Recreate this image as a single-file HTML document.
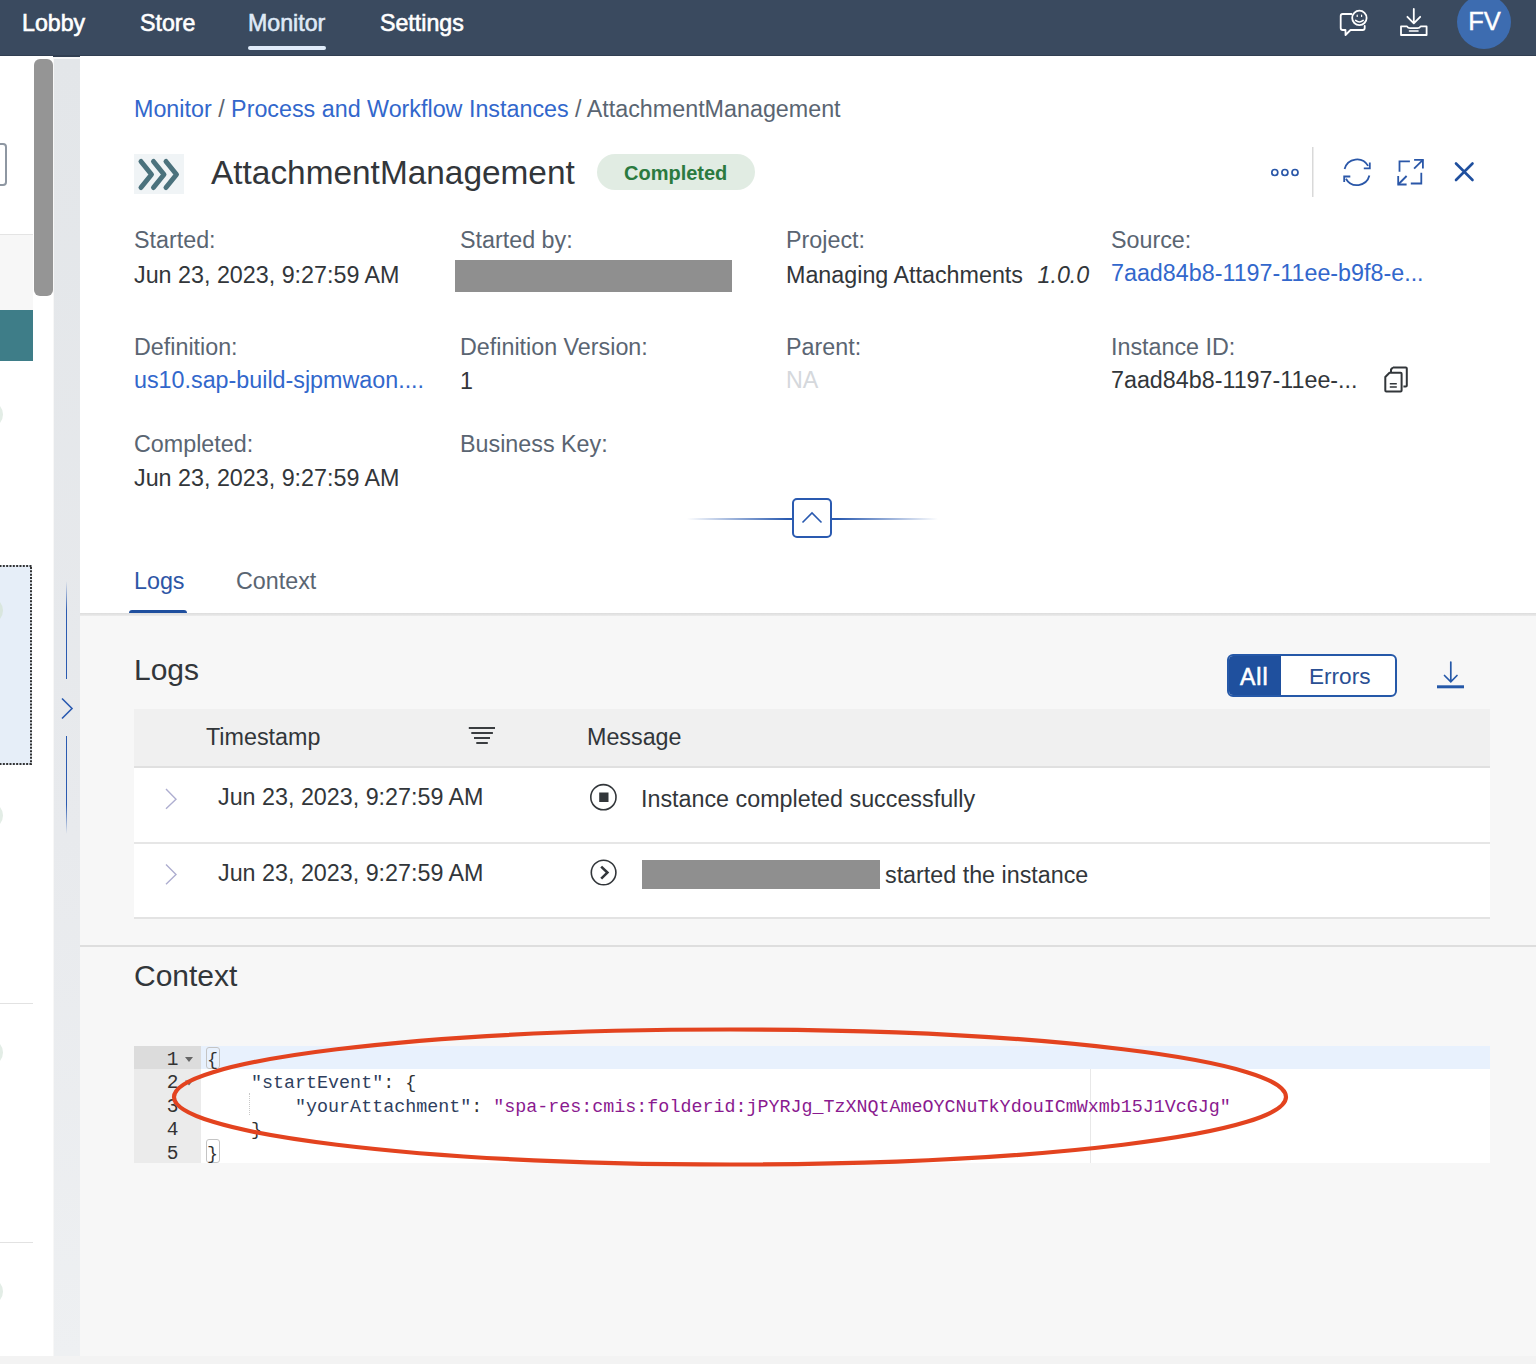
<!DOCTYPE html>
<html><head><meta charset="utf-8">
<style>
*{box-sizing:border-box;margin:0;padding:0}
html,body{width:1536px;height:1364px;overflow:hidden;background:#f7f7f7;font-family:"Liberation Sans",sans-serif;color:#32363a}
.abs{position:absolute}
#hdr{left:0;top:0;width:1536px;height:57px;background:#3a4a5f;border-bottom:2px solid #313f52}
.nav{position:absolute;top:9px;font-size:23.2px;font-weight:normal;-webkit-text-stroke:0.6px currentColor;color:#fff;line-height:28px}
#left{left:0;top:56px;width:33px;height:1300px;background:#fff}
#sb{left:33px;top:56px;width:20px;height:1300px;background:#fff}
#thumb{left:34px;top:59px;width:19.3px;height:237px;background:#959595;border-radius:6px}
#strip{left:54px;top:58.5px;width:26px;height:1297.5px;background:linear-gradient(180deg,#e3e6e9,#e8eaed 60%,#eef0f2)}
#white{left:80px;top:56px;width:1456px;height:557px;background:#fff}
.t23{font-size:23.3px;line-height:28px;white-space:nowrap}
.lbl{color:#5a6572}
.val{color:#32363a}
.lnk{color:#3267cc}
</style></head><body>
<div id="hdr" class="abs">
  <div class="nav" style="left:22px">Lobby</div>
  <div class="nav" style="left:140px">Store</div>
  <div class="nav" style="left:248px;color:#dfe9f6">Monitor</div>
  <div class="abs" style="left:248px;top:46px;width:78px;height:4px;border-radius:2px;background:#e0ecfa"></div>
  <div class="nav" style="left:380px">Settings</div>
  <svg class="abs" style="left:1330px;top:0" width="110" height="56" viewBox="0 0 110 56">
    <g fill="none" stroke="#fff" stroke-width="1.8" stroke-linejoin="round" stroke-linecap="round">
      <path d="M21.5 14 H12.7 Q10.7 14 10.7 16 V28 Q10.7 30 12.7 30 H15.5 V35 L20.5 30 H32.7 Q34.7 30 34.7 28 V25.8"/>
      <circle cx="29.4" cy="17.9" r="7.2"/>
      <path d="M25.6 20.4 Q29.4 23.6 33.2 20.4" stroke-width="1.6"/>
      <path d="M27.2 15.2 v1.2 M31.6 15.2 v1.2" stroke-width="1.2"/>
      <path d="M83.8 9 V23 M77.4 16.8 L83.8 23.4 L90.2 16.8"/>
      <path d="M71 26.4 H77 Q78 28.2 80 28.2 H87.6 Q89.6 28.2 90.6 26.4 H96.6 V35 H71 Z"/>
      <path d="M79.5 31 H88" stroke-width="1.6"/>
    </g>
  </svg>
  <div class="abs" style="left:1457px;top:-5.5px;width:54px;height:54px;border-radius:27px;background:#3d6cb0"></div>
  <div class="abs" style="left:1457.5px;top:5px;width:54px;text-align:center;color:#fff;font-size:25.5px;line-height:32px;-webkit-text-stroke:0.4px #fff">FV</div>
</div>
<div id="left" class="abs"></div>
<div class="abs" style="left:-10px;top:143px;width:17px;height:43px;border:2px solid #8e97a2;border-radius:4px;background:#fff"></div>
<div class="abs" style="left:0;top:234px;width:33px;height:1px;background:#e4e4e4"></div>
<div class="abs" style="left:0;top:235px;width:33px;height:75px;background:#f7f7f7"></div>
<div class="abs" style="left:0;top:310px;width:33px;height:51px;background:#3e7d88"></div>
<div class="abs" style="left:-24px;top:401px;width:27px;height:27px;border-radius:14px;background:#e3ede6"></div>
<div class="abs" style="left:0;top:565px;width:32px;height:200px;background:#e6eef8"></div>
<svg class="abs" style="left:0;top:560px" width="40" height="210" viewBox="0 560 40 210"><g stroke="#333" stroke-width="2" stroke-dasharray="2 1.33" fill="none"><path d="M-0.5 566 H32"/><path d="M31 567 V765"/><path d="M-0.5 764 H32"/></g></svg>
<div class="abs" style="left:-24px;top:597px;width:27px;height:27px;border-radius:14px;background:#d9e6de"></div>
<div class="abs" style="left:-24px;top:802px;width:27px;height:27px;border-radius:14px;background:#e3ede6"></div>
<div class="abs" style="left:0;top:1003px;width:33px;height:1px;background:#e2e2e2"></div>
<div class="abs" style="left:-24px;top:1039px;width:27px;height:27px;border-radius:14px;background:#e3ede6"></div>
<div class="abs" style="left:0;top:1242px;width:33px;height:1px;background:#e2e2e2"></div>
<div class="abs" style="left:-24px;top:1278px;width:27px;height:27px;border-radius:14px;background:#e3ede6"></div>
<div class="abs" style="left:0;top:1356px;width:1536px;height:8px;background:#f3f3f3"></div>
<div id="sb" class="abs"></div>
<div id="strip" class="abs"></div>
<div id="thumb" class="abs"></div>
<div id="white" class="abs"></div>
<div class="abs" style="left:65.5px;top:581px;width:1.5px;height:98px;background:linear-gradient(180deg,rgba(42,90,176,0),#2a5ab0 30%,#2a5ab0)"></div>
<div class="abs" style="left:65.5px;top:736px;width:1.5px;height:98px;background:linear-gradient(180deg,#2a5ab0,#2a5ab0 70%,rgba(42,90,176,0))"></div>
<svg class="abs" style="left:55px;top:690px" width="25" height="40"><path d="M7 8.5 L17 18.5 L7 28.5" fill="none" stroke="#2a5ab0" stroke-width="1.6"/></svg>


<!-- breadcrumb -->
<div class="abs t23" style="left:134px;top:95px"><span class="lnk">Monitor</span><span class="lbl"> / </span><span class="lnk">Process and Workflow Instances</span><span class="lbl"> / AttachmentManagement</span></div>

<!-- title -->
<div class="abs" style="left:134px;top:154px;width:50px;height:40px;background:#f0f4f6"></div>
<svg class="abs" style="left:0;top:0" width="200" height="200"><g fill="none" stroke="#4b727d" stroke-width="5" stroke-linecap="round" stroke-linejoin="round"><path d="M141 161.5 L151.5 174.5 L141 187.5"/><path d="M153.5 161.5 L164 174.5 L153.5 187.5"/><path d="M166 161.5 L176.5 174.5 L166 187.5"/></g></svg>
<div class="abs" style="left:211px;top:151px;font-size:33.4px;line-height:44px;color:#32363a;white-space:nowrap">AttachmentManagement</div>
<div class="abs" style="left:597px;top:154px;width:158px;height:36px;border-radius:18px;background:#e1ece3"></div>
<div class="abs" style="left:624px;top:161px;font-size:20px;line-height:24px;font-weight:bold;color:#2b7a3f;white-space:nowrap">Completed</div>


<!-- actions -->
<svg class="abs" style="left:1260px;top:140px" width="230" height="70" viewBox="1260 140 230 70">
  <g fill="none" stroke="#2a57a8" stroke-width="1.7">
    <circle cx="1274.8" cy="172.5" r="3"/><circle cx="1284.9" cy="172.5" r="3"/><circle cx="1295" cy="172.5" r="3"/>
  </g>
  <rect x="1312" y="147" width="1.5" height="50" fill="#d9d9d9"/>
  <g fill="none" stroke="#2a57a8" stroke-width="1.8" stroke-linecap="butt" stroke-linejoin="miter">
    <path d="M1344.6 169 A12.8 12.8 0 0 1 1368.1 165.9"/>
    <path d="M1369.4 175.6 A12.8 12.8 0 0 1 1345.9 178.7"/>
    <path d="M1363.8 168.4 H1369.8 V162.6" stroke-linecap="butt"/>
    <path d="M1350.3 176.5 H1344.2 V182" stroke-linecap="butt"/>
    <path d="M1409.9 161.4 H1399.5 V171.8"/><path d="M1414.1 159.8 H1422.9 V168.6"/><path d="M1414.1 168.6 L1422.9 159.8"/>
    <path d="M1398.2 184.5 L1406.6 176"/><path d="M1398.2 176 V184.5 H1406.6"/><path d="M1410.8 183.5 H1421.3 V172.8"/>
  </g>
  <g stroke="#1f4f9e" stroke-width="2.6" stroke-linecap="round"><path d="M1456 163.5 L1472.5 180 M1472.5 163.5 L1456 180"/></g>
</svg>
<!-- metadata -->
<div class="abs t23 lbl" style="left:134px;top:226px">Started:</div>
<div class="abs t23 val" style="left:134px;top:261px">Jun 23, 2023, 9:27:59 AM</div>
<div class="abs t23 lbl" style="left:460px;top:226px">Started by:</div>
<div class="abs" style="left:455px;top:260px;width:277px;height:32px;background:#8f8f8f"></div>
<div class="abs t23 lbl" style="left:786px;top:226px">Project:</div>
<div class="abs t23 val" style="left:786px;top:261px">Managing Attachments <i style="margin-left:8px">1.0.0</i></div>
<div class="abs t23 lbl" style="left:1111px;top:226px">Source:</div>
<div class="abs t23 lnk" style="left:1111px;top:259px">7aad84b8-1197-11ee-b9f8-e...</div>

<div class="abs t23 lbl" style="left:134px;top:333px">Definition:</div>
<div class="abs t23 lnk" style="left:134px;top:366px">us10.sap-build-sjpmwaon....</div>
<div class="abs t23 lbl" style="left:460px;top:333px">Definition Version:</div>
<div class="abs t23 val" style="left:460px;top:367px">1</div>
<div class="abs t23 lbl" style="left:786px;top:333px">Parent:</div>
<div class="abs t23" style="left:786px;top:366px;color:#d5d8dc">NA</div>
<div class="abs t23 lbl" style="left:1111px;top:333px">Instance ID:</div>
<div class="abs t23 val" style="left:1111px;top:366px">7aad84b8-1197-11ee-...</div>
<svg class="abs" style="left:1380px;top:360px" width="34" height="40" viewBox="1380 360 34 40"><g fill="none" stroke="#32363a" stroke-width="2" stroke-linejoin="round"><path d="M1393 367.4 L1391 369.5 V372.8 M1393 367.4 H1405.8 Q1406.8 367.4 1406.8 368.4 V385.6 Q1406.8 386.6 1405.8 386.6 H1403.4"/><path d="M1389.5 372.8 H1400.6 Q1401.6 372.8 1401.6 373.8 V390.6 Q1401.6 391.6 1400.6 391.6 H1386.3 Q1385.3 391.6 1385.3 390.6 V377 L1389.5 372.8 Z"/><path d="M1389.8 383.8 H1396.8 M1389.8 387 H1396.8" stroke-width="1.6"/></g></svg>

<div class="abs t23 lbl" style="left:134px;top:430px">Completed:</div>
<div class="abs t23 val" style="left:134px;top:464px">Jun 23, 2023, 9:27:59 AM</div>
<div class="abs t23 lbl" style="left:460px;top:430px">Business Key:</div>

<!-- collapse -->
<div class="abs" style="left:687px;top:518px;width:251px;height:2px;background:linear-gradient(90deg,rgba(42,90,176,0),#2a5ab0 40%,#2a5ab0 60%,rgba(42,90,176,0))"></div>
<div class="abs" style="left:792px;top:498px;width:40px;height:40px;border:2px solid #2a5ab0;border-radius:5px;background:#fff"></div>
<svg class="abs" style="left:792px;top:498px" width="40" height="40"><path d="M10.5 24.5 L20 15 L29.5 24.5" fill="none" stroke="#2a5ab0" stroke-width="1.6"/></svg>

<!-- tabs -->
<div class="abs t23" style="left:134px;top:567px;color:#2d56a6">Logs</div>
<div class="abs t23 lbl" style="left:236px;top:567px">Context</div>
<div class="abs" style="left:129px;top:610px;width:58px;height:4px;background:#1f4f9e;border-radius:3px 3px 0 0"></div>
<div class="abs" style="left:80px;top:613px;width:1456px;height:3px;background:linear-gradient(180deg,#dcdcdc,#ececec)"></div>

<!-- logs -->
<div class="abs" style="left:134px;top:650px;font-size:30px;line-height:40px;color:#32363a">Logs</div>


<div class="abs" style="left:1227px;top:654px;width:170px;height:43px;border:2px solid #2558a8;border-radius:6px;background:#fff;overflow:hidden">
  <div class="abs" style="left:0;top:0;width:52px;height:39px;background:#1f509e"></div>
</div>
<div class="abs" style="left:1240px;top:662px;font-size:23px;line-height:30px;letter-spacing:1px;-webkit-text-stroke:0.6px #fff;color:#fff">All</div>
<div class="abs" style="left:1309px;top:662px;font-size:22.6px;line-height:30px;color:#2a4f93">Errors</div>
<svg class="abs" style="left:1430px;top:655px" width="40" height="40" viewBox="1430 655 40 40"><g stroke="#2558a8" fill="none" stroke-linecap="round"><path d="M1450.8 662 V681.5 M1444.5 675.5 L1450.8 681.8 L1457 675.5" stroke-width="1.7"/><path d="M1437 686.8 H1464" stroke-width="3" stroke-linecap="butt"/></g></svg>

<div class="abs" style="left:134px;top:709px;width:1356px;height:58px;background:#f0f0f0"></div>
<div class="abs" style="left:134px;top:766px;width:1356px;height:2px;background:#e0e0e0"></div>
<div class="abs" style="left:134px;top:768px;width:1356px;height:75px;background:#fff"></div>
<div class="abs" style="left:134px;top:842px;width:1356px;height:2px;background:#e6e6e6"></div>
<div class="abs" style="left:134px;top:844px;width:1356px;height:74px;background:#fff"></div>
<div class="abs" style="left:134px;top:917px;width:1356px;height:2px;background:#e3e3e3"></div>
<div class="abs t23" style="left:206px;top:723px;color:#32363a">Timestamp</div>
<svg class="abs" style="left:460px;top:720px" width="40" height="30" viewBox="460 720 40 30"><g stroke="#3a3d40" stroke-width="1.9"><path d="M468.8 728 H495 M471.3 733 H492.9 M474 738 H490 M476.3 743 H487.8"/></g></svg>
<div class="abs t23" style="left:587px;top:723px;color:#32363a">Message</div>

<svg class="abs" style="left:150px;top:780px" width="40" height="120" viewBox="150 780 40 120"><g fill="none" stroke="#aeaed0" stroke-width="1.4"><path d="M166 789 L176 799.2 L166 808.8"/><path d="M166 864.5 L176 874.5 L166 884.2"/></g></svg>
<div class="abs t23 val" style="left:218px;top:783px">Jun 23, 2023, 9:27:59 AM</div>
<div class="abs t23 val" style="left:218px;top:859px">Jun 23, 2023, 9:27:59 AM</div>
<svg class="abs" style="left:585px;top:778px" width="40" height="115" viewBox="585 778 40 115"><g fill="none" stroke="#32363a" stroke-width="1.6"><circle cx="603.4" cy="797.2" r="12.6"/><circle cx="603.6" cy="872.5" r="12.3"/><path d="M601.2 866.6 L607.4 872.6 L601.2 878.6" stroke-width="2.6"/></g><rect x="599.2" y="792.5" width="9.3" height="9.5" fill="#32363a"/></svg>
<div class="abs t23 val" style="left:641px;top:785px">Instance completed successfully</div>
<div class="abs" style="left:642px;top:860px;width:238px;height:29px;background:#8f8f8f"></div>
<div class="abs t23 val" style="left:885px;top:861px">started the instance</div>
<!-- context -->
<div class="abs" style="left:80px;top:945px;width:1456px;height:2px;background:#dedede"></div>
<div class="abs" style="left:134px;top:956px;font-size:30px;line-height:40px;color:#32363a">Context</div>


<div class="abs" style="left:134px;top:1046px;width:1356px;height:117px;background:#fff"></div>
<div class="abs" style="left:134px;top:1046px;width:67px;height:117px;background:#ebebeb"></div>
<div class="abs" style="left:134px;top:1046px;width:67px;height:23.4px;background:#dcdcdc"></div>
<div class="abs" style="left:201px;top:1046px;width:1289px;height:23.4px;background:#e8f1fd"></div>
<div class="abs" style="left:1090px;top:1069px;width:1px;height:94px;background:#e8e8e8"></div>
<div class="abs" style="left:249px;top:1093px;width:0;height:22px;border-left:1px dotted #c8c8c8"></div>
<div class="abs" style="left:206px;top:1046.5px;width:14px;height:22.5px;border:1px solid #c4c4c4;border-radius:3px"></div>
<div class="abs" style="left:206px;top:1139px;width:14px;height:23.5px;border:1px solid #c4c4c4;border-radius:3px"></div>
<pre class="abs" style="left:134px;top:1049px;width:44.5px;font-family:'Liberation Mono',monospace;font-size:19.5px;line-height:23.4px;color:#333;text-align:right;margin:0">1
2
3
4
5</pre>
<svg class="abs" style="left:180px;top:1050px" width="20" height="40"><path d="M5 7 L13 7 L9 12 Z M5 30.5 L13 30.5 L9 35.5 Z" fill="#666"/></svg>
<pre class="abs" style="left:207px;top:1049px;font-family:'Liberation Mono',monospace;font-size:18.35px;line-height:23.4px;color:#333;margin:0;letter-spacing:0">{
    <span style="color:#2e3e5e">"startEvent"</span>: {
        <span style="color:#2e3e5e">"yourAttachment"</span>: <span style="color:#8a1a8f">"spa-res:cmis:folderid:jPYRJg_TzXNQtAmeOYCNuTkYdouICmWxmb15J1VcGJg"</span>
    }
}</pre>
<svg class="abs" style="left:0;top:0" width="1536" height="1364"><ellipse cx="730" cy="1097" rx="556" ry="67.5" fill="none" stroke="#e3431f" stroke-width="4.2"/></svg>
</body></html>
